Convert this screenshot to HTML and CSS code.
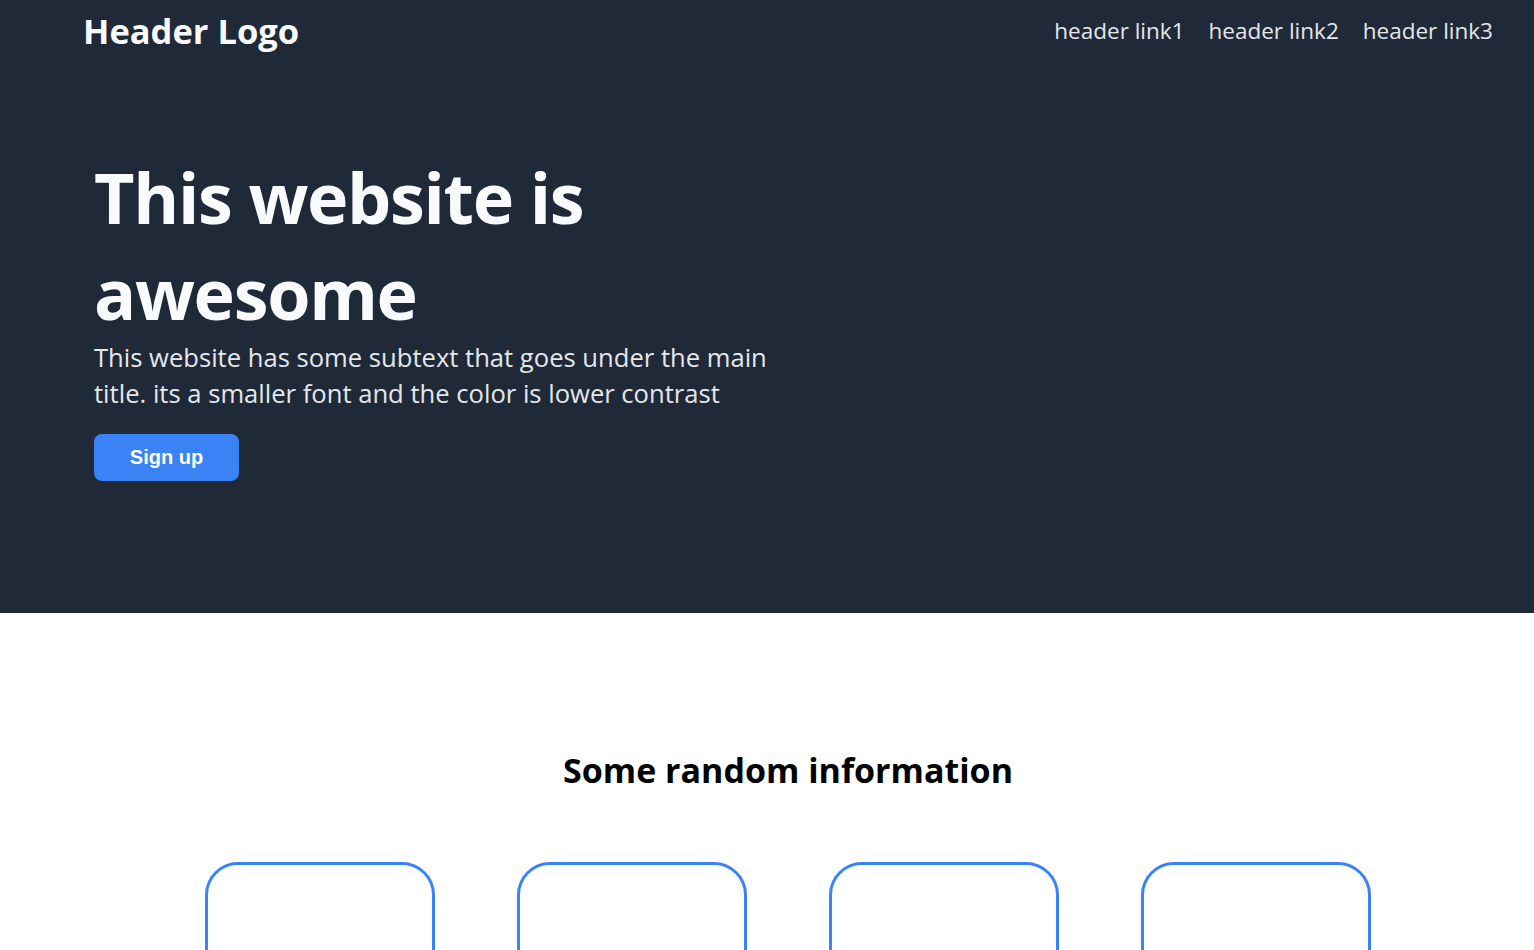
FILE: index.html
```html
<!DOCTYPE html>
<html lang="en">
<head>
<meta charset="utf-8">
<title>Header Logo</title>
<link rel="stylesheet" href="styles.css">
</head>
<body>
<div class="page">
  <div class="dark">
    <header class="header">
      <div class="logo">Header Logo</div>
      <nav class="nav">
        <a href="#">header link1</a>
        <a href="#">header link2</a>
        <a href="#">header link3</a>
      </nav>
    </header>
    <section class="hero">
      <h1 class="hero-title">This website is awesome</h1>
      <p class="hero-sub">This website has some subtext that goes under the main title. its a smaller font and the color is lower contrast</p>
      <button class="btn">Sign up</button>
    </section>
  </div>
  <section class="info">
    <h2 class="info-title">Some random information</h2>
    <div class="cards">
      <div class="card"></div>
      <div class="card"></div>
      <div class="card"></div>
      <div class="card"></div>
    </div>
  </section>
</div>
</body>
</html>
```
FILE: styles.css
```css
html, body {
  margin: 0;
  padding: 0;
  overflow-x: hidden;
}
body {
  font-family: "Open Sans", "Noto Sans", sans-serif;
  background: #ffffff;
}
.page {
  width: 1576px;
}
.dark {
  background: #1f2937;
  height: 613px;
}
.header {
  display: flex;
  justify-content: space-between;
  align-items: center;
  height: 62px;
  padding: 0 83px;
}
.logo {
  color: #f9fafb;
  font-size: 34.5px;
  font-weight: 700;
  line-height: 46px;
}
.nav {
  display: flex;
  gap: 24px;
}
.nav a {
  color: #e5e7eb;
  text-decoration: none;
  font-size: 22.5px;
  line-height: 32px;
}
.hero {
  padding: 87px 94px 0;
  max-width: 700px;
}
.hero-title {
  margin: 0;
  color: #f9fafb;
  font-size: 70px;
  font-weight: 700;
  line-height: 96px;
  letter-spacing: -1.3px;
}
.hero-sub {
  margin: -1px 0 22px;
  color: #e5e7eb;
  font-size: 25.6px;
  line-height: 36px;
}
.btn {
  background: #3b82f6;
  color: #ffffff;
  border: none;
  border-radius: 8px;
  width: 145px;
  height: 47px;
  font-family: "Liberation Sans", Arial, sans-serif;
  font-weight: 700;
  font-size: 20px;
  padding: 0;
}
.info {
  padding-top: 130px;
}
.info-title {
  margin: 0;
  text-align: center;
  font-size: 34px;
  font-weight: 700;
  line-height: 54px;
  color: #000000;
}
.cards {
  display: flex;
  justify-content: center;
  gap: 82px;
  margin-top: 65px;
}
.card {
  width: 230px;
  height: 300px;
  box-sizing: border-box;
  border: 3px solid #3b82f6;
  border-radius: 33px;
}
```
